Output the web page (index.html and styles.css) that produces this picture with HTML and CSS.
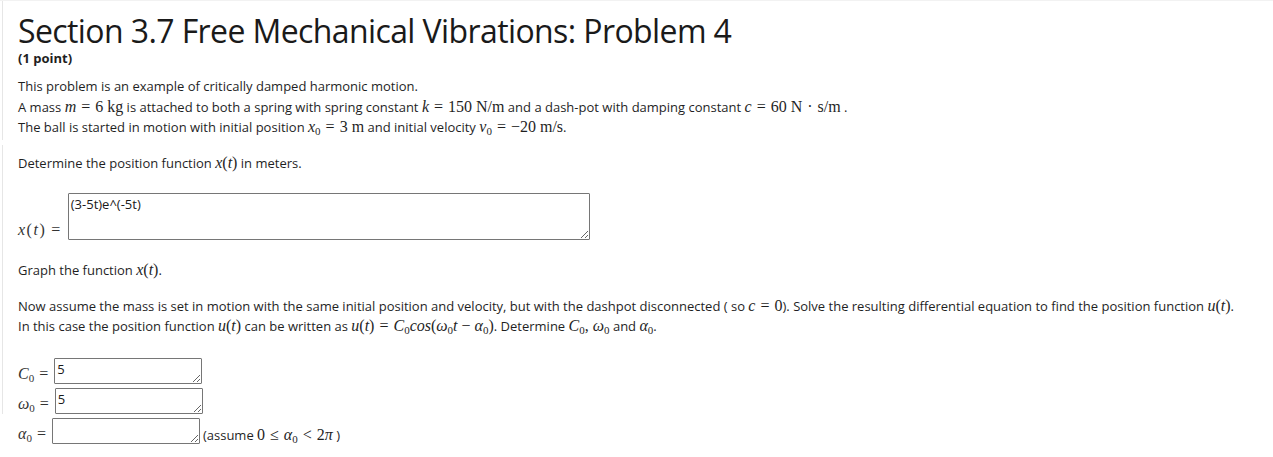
FILE: index.html
```html
<!DOCTYPE html>
<html>
<head>
<meta charset="utf-8">
<link rel="stylesheet" href="styles.css">
</head>
<body>
<div class="page">
  <section class="block top">
    <h1 class="title">Section 3.7 Free Mechanical Vibrations: Problem 4</h1>
    <div class="points">(1 point)</div>
    <p class="para">
      This problem is an example of critically damped harmonic motion.<br>
      A mass <span class="m"><i>m</i><span class="eq">=</span>6 kg</span> is attached to both a spring with spring constant <span class="m"><i>k</i><span class="eq">=</span>150 N/m</span> and a dash-pot with damping constant <span class="m"><i>c</i><span class="eq">=</span>60 N <span class="op">·</span> s/m</span> .<br>
      The ball is started in motion with initial position <span class="m"><i>x</i><sub>0</sub><span class="eq">=</span>3 m</span> and initial velocity <span class="m"><i>v</i><sub>0</sub><span class="eq">=</span>−20 m/s</span>.
    </p>
  </section>
  <section class="block main">
    <p class="para q">Determine the position function <span class="m"><i>x</i>(<i>t</i>)</span> in meters.</p>
    <div class="answer-row wide">
      <span class="m lbl xt"><i>x</i>(<i>t</i>)<span class="eq">=</span></span>
      <textarea class="box big">(3-5t)e^(-5t)</textarea>
    </div>
    <p class="para graph">Graph the function <span class="m"><i>x</i>(<i>t</i>)</span>.</p>
    <p class="para now">
      Now assume the mass is set in motion with the same initial position and velocity, but with the dashpot disconnected ( so <span class="m"><i>c</i><span class="eq">=</span>0</span>). Solve the resulting differential equation to find the position function <span class="m"><i>u</i>(<i>t</i>)</span>.<br>
      In this case the position function <span class="m"><i>u</i>(<i>t</i>)</span> can be written as <span class="m"><i>u</i>(<i>t</i>)<span class="eq">=</span><i>C</i><sub>0</sub><i>cos</i>(<i>ω</i><sub>0</sub><i>t</i><span class="bin">−</span><i>α</i><sub>0</sub>)</span>. Determine <span class="m"><i>C</i><sub>0</sub>, <i>ω</i><sub>0</sub></span> and <span class="m"><i>α</i><sub>0</sub></span>.
    </p>
    <div class="small-rows">
      <div class="answer-row">
        <span class="m lbl"><i>C</i><sub>0</sub><span class="eq">=</span></span>
        <textarea class="box small">5</textarea>
      </div>
      <div class="answer-row">
        <span class="m lbl"><i>ω</i><sub>0</sub><span class="eq">=</span></span>
        <textarea class="box small">5</textarea>
      </div>
    </div>
  </section>
  <div class="answer-row last">
    <span class="m lbl"><i>α</i><sub>0</sub><span class="eq">=</span></span>
    <textarea class="box small"></textarea>
    <span class="note">(assume <span class="m">0<span class="eq">≤</span><i>α</i><sub>0</sub><span class="eq">&lt;</span>2<i>π</i></span> )</span>
  </div>
</div>
</body>
</html>
```
FILE: styles.css
```css
html, body {
  margin: 0;
  padding: 0;
  background: #ffffff;
}
body {
  font-family: "Open Sans", "Noto Sans", sans-serif;
  font-size: 13px;
  color: #1f1f1f;
  border-top: 1px solid #f2f2f2;
}
.page {
  padding-left: 2px;
}
.block {
  border-left: 1px solid #e6e6e6;
  padding-left: 15px;
}
.top {
  padding-top: 12px;
  padding-bottom: 2px;
}
.title {
  margin: 0;
  font-family: "Open Sans", sans-serif;
  font-weight: 500;
  font-size: 32px;
  line-height: 36px;
  color: #1a1a1a;
  letter-spacing: -0.6px;
}
.points {
  font-weight: 700;
  font-size: 13px;
  line-height: 18px;
  margin-top: 0;
}
.para {
  margin: 9px 0 0 0;
  line-height: 20.5px;
}
.main {
  margin-top: 5px;
  padding-top: 8px;
}
.main .q {
  margin-top: 0;
}
.m {
  font-family: "Liberation Serif", "DejaVu Serif", serif;
  font-size: 16px;
  line-height: 1;
  white-space: nowrap;
}
.m i {
  font-style: italic;
}
.m sub {
  font-size: 11px;
  vertical-align: -3px;
  line-height: 0;
}
.eq {
  margin: 0 5px;
}
.bin {
  margin: 0 4px;
}
.op {
  margin: 0 1px;
}
.answer-row {
  display: flex;
  align-items: flex-end;
}
.answer-row.wide {
  margin-top: 20px;
}
.lbl {
  margin-right: 1px;
  color: #333;
  padding-bottom: 2px;
}
.lbl.xt {
  letter-spacing: 1.5px;
  margin-right: 1px;
}
.box {
  font-family: "Open Sans", sans-serif;
  font-size: 13px;
  color: #1a1a1a;
  border: 1px solid #767676;
  border-radius: 1px;
  padding: 1px 2px;
  margin: 0;
  resize: both;
  box-sizing: border-box;
}
.box.big {
  width: 522px;
  height: 47px;
}
.box.small {
  width: 148px;
  height: 26px;
  padding: 0 2px;
  line-height: 20px;
}
.graph {
  margin-top: 20px;
}
.now {
  margin-top: 15px;
}
.small-rows {
  margin-top: 21px;
  display: flex;
  flex-direction: column;
  gap: 4px;
  padding-bottom: 0;
}
.answer-row.last {
  margin-top: 4px;
  padding-left: 16px;
}
.note {
  margin-left: 3px;
  margin-bottom: 0px;
}
```
